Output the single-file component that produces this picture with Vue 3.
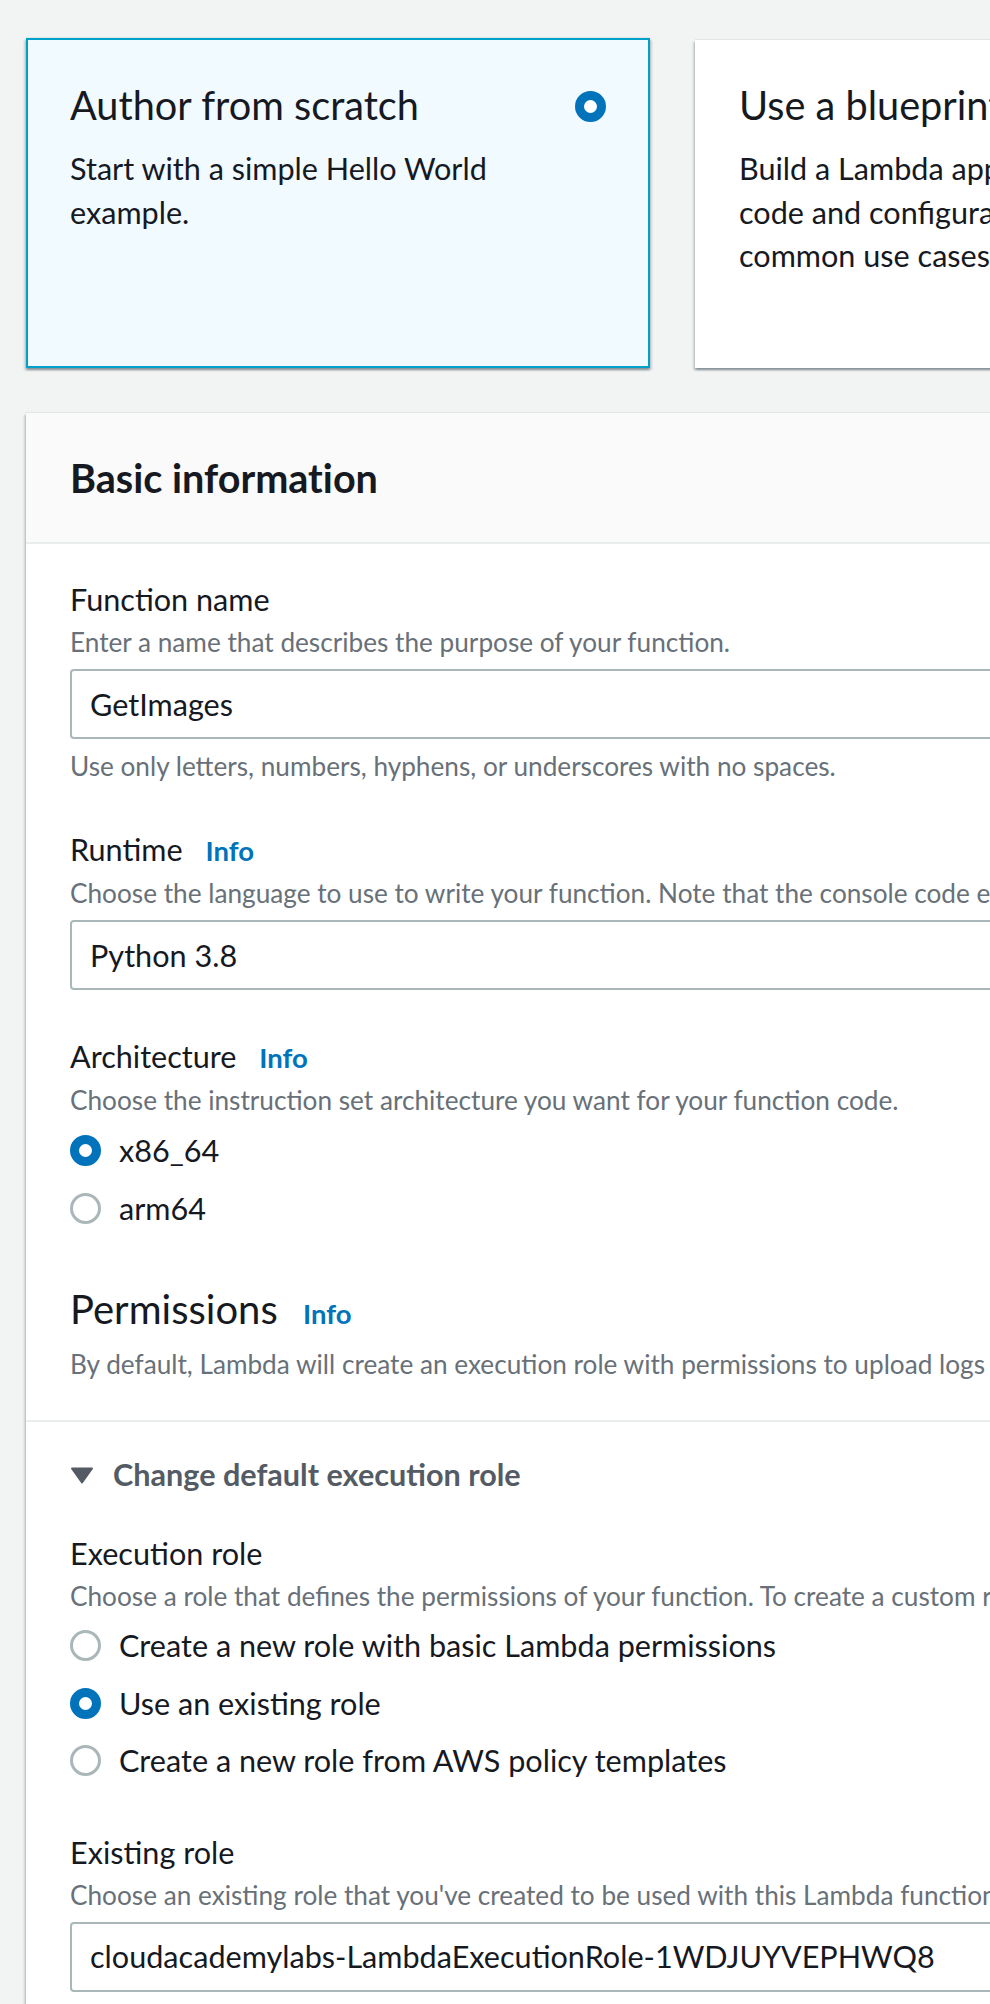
<script setup>
const architectures = [
  { label: 'x86_64', on: true },
  { label: 'arm64', on: false },
]
const roles = [
  { label: 'Create a new role with basic Lambda permissions', on: false },
  { label: 'Use an existing role', on: true },
  { label: 'Create a new role from AWS policy templates', on: false },
]
</script>

<template>
  <div class="page">
    <div class="cards">
      <section class="card selected">
        <h3>Author from scratch</h3>
        <p>Start with a simple Hello World example.</p>
        <span class="radio on big"></span>
      </section>
      <section class="card plain">
        <h3>Use a blueprint</h3>
        <p>Build a Lambda application from sample<br>code and configuration presets for<br>common use cases.</p>
        <span class="radio big"></span>
      </section>
    </div>

    <section class="panel">
      <header class="panel-head"><h2>Basic information</h2></header>
      <div class="panel-body">
        <div class="label">Function name</div>
        <div class="desc">Enter a name that describes the purpose of your function.</div>
        <div class="input">GetImages</div>
        <div class="desc hint">Use only letters, numbers, hyphens, or underscores with no spaces.</div>

        <div class="label next">Runtime <a class="info">Info</a></div>
        <div class="desc">Choose the language to use to write your function. Note that the console code editor supports only Node.js, Python, and Ruby.</div>
        <div class="input">Python 3.8</div>

        <div class="label next2">Architecture <a class="info">Info</a></div>
        <div class="desc">Choose the instruction set architecture you want for your function code.</div>
        <div class="radios arch-list">
          <label v-for="a in architectures" :key="a.label" class="opt">
            <span class="radio" :class="{ on: a.on }"></span>{{ a.label }}
          </label>
        </div>

        <h3 class="perm">Permissions <a class="info">Info</a></h3>
        <div class="desc perm-desc">By default, Lambda will create an execution role with permissions to upload logs to Amazon CloudWatch Logs.</div>
      </div>

      <div class="expander">
        <div class="exp-head">
          <svg class="caret" width="24" height="18" viewBox="0 0 24 18"><path d="M2 2.5h20L12 16.5z" fill="#545b64" stroke="#545b64" stroke-width="2" stroke-linejoin="round"/></svg>
          <span>Change default execution role</span>
        </div>
        <div class="label exec">Execution role</div>
        <div class="desc">Choose a role that defines the permissions of your function. To create a custom role, go to the IAM console.</div>
        <div class="radios role-list">
          <label v-for="r in roles" :key="r.label" class="opt">
            <span class="radio" :class="{ on: r.on }"></span>{{ r.label }}
          </label>
        </div>
        <div class="label existing">Existing role</div>
        <div class="desc">Choose an existing role that you've created to be used with this Lambda function. The role must have permission.</div>
        <div class="input">cloudacademylabs-LambdaExecutionRole-1WDJUYVEPHWQ8</div>
      </div>
    </section>
  </div>
</template>

<style>
html, body { margin: 0; background: #f2f3f3; }
</style>

<style scoped>
.page {
  width: 990px;
  height: 2004px;
  box-sizing: border-box;
  padding: 38px 0 0 26px;
  overflow: hidden;
  background: #f2f3f3;
  color: #16191f;
  font-family: Lato, "Liberation Sans", sans-serif;
  font-size: 30.6px;
}
h2, h3, p { margin: 0; font-weight: 400; }
.cards { display: flex; gap: 45px; width: 1400px; align-items: flex-end; }
.card {
  position: relative;
  width: 624px;
  height: 330px;
  box-sizing: border-box;
  padding: 38px 44px;
  background: #fff;
  box-shadow: 0 -1px 1px 0 rgba(0, 28, 36, .06), 0 2px 2px 0 rgba(0, 28, 36, .3), 2px 2px 2px 0 rgba(0, 28, 36, .12), -2px 2px 2px 0 rgba(0, 28, 36, .12);
}
.card.plain { height: 328px; }
.card.selected {
  background: #f1faff;
  border: 2px solid #00a1c9;
  padding: 38px 42px;
}
.card h3 { font-size: 39.7px; line-height: 54px; margin-bottom: 15px; white-space: nowrap; }
.card p { width: 525px; line-height: 43.5px; white-space: normal; }
.plain p { width: 700px; }
.radio {
  flex: none;
  width: 31px;
  height: 31px;
  box-sizing: border-box;
  border-radius: 50%;
  border: 3px solid #aab7b8;
  background: #fff;
  margin-right: 18px;
}
.radio.on { border: 9.5px solid #0073bb; }
.radio.big { position: absolute; top: 51px; right: 44px; margin: 0; }
.selected .radio.big { top: 51px; right: 42px; }
.panel {
  width: 1400px;
  margin-top: 45px;
  background: #fff;
  box-shadow: 0 -1px 1px 0 rgba(0, 28, 36, .06), 0 2px 2px 0 rgba(0, 28, 36, .3), 2px 2px 2px 0 rgba(0, 28, 36, .12), -2px 2px 2px 0 rgba(0, 28, 36, .12);
}
.panel-head {
  height: 131px;
  box-sizing: border-box;
  padding: 0 44px;
  display: flex;
  align-items: center;
  background: #fafafa;
  border-bottom: 2px solid #eaeded;
}
.panel-head h2 { font-size: 39.6px; font-weight: 700; font-variant-ligatures: none; }
.panel-body { padding: 34px 44px 36px; border-bottom: 2px solid #eaeded; }
.label { line-height: 44px; white-space: nowrap; }
.next { margin-top: 42px; }
.next2 { margin-top: 45px; }
.info { color: #0073bb; font-size: 27.5px; font-weight: 700; margin-left: 15px; }
.desc { color: #687078; font-size: 26.2px; line-height: 40px; white-space: nowrap; }
.hint { margin-top: 7px; }
.input {
  height: 70px;
  box-sizing: border-box;
  margin-top: 7px;
  padding: 0 18px;
  display: flex;
  align-items: center;
  background: #fff;
  border: 2px solid #aab7b8;
  border-radius: 4px;
  white-space: nowrap;
}
.radios { display: flex; flex-direction: column; }
.arch-list { margin-top: 2px; }
.opt { display: flex; align-items: center; height: 57.5px; }
.perm { margin-top: 44px; font-size: 40px; line-height: 56px; }
.perm-desc { margin-top: 2px; }
.expander { padding: 31px 44px 60px; }
.exp-head { display: flex; align-items: center; gap: 19px; line-height: 44px; color: #545b64; font-weight: 700; }
.exec { margin-top: 35px; }
.role-list { margin-top: 1px; }
.existing { margin-top: 41px; }
</style>
